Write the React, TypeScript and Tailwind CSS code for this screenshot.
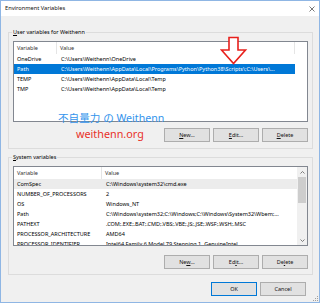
import React from 'react';

const userVars = [
    { name: 'OneDrive', value: 'C:\\Users\\Weithenn\\OneDrive' },
    { name: 'Path', value: 'C:\\Users\\Weithenn\\AppData\\Local\\Programs\\Python\\Python38\\Scripts\\;C:\\Users\\...', selected: true },
    { name: 'TEMP', value: 'C:\\Users\\Weithenn\\AppData\\Local\\Temp' },
    { name: 'TMP', value: 'C:\\Users\\Weithenn\\AppData\\Local\\Temp' },
];

const systemVars = [
    { name: 'ComSpec', value: 'C:\\Windows\\system32\\cmd.exe', selected: true },
    { name: 'NUMBER_OF_PROCESSORS', value: '2' },
    { name: 'OS', value: 'Windows_NT' },
    { name: 'Path', value: 'C:\\Windows\\system32;C:\\Windows;C:\\Windows\\System32\\Wbem;...' },
    { name: 'PATHEXT', value: '.COM;.EXE;.BAT;.CMD;.VBS;.VBE;.JS;.JSE;.WSF;.WSH;.MSC' },
    { name: 'PROCESSOR_ARCHITECTURE', value: 'AMD64' },
    { name: 'PROCESSOR_IDENTIFIER', value: 'Intel64 Family 6 Model 79 Stepping 1, GenuineIntel' },
];

function Btn({ pre, key1, post, primary }: { pre?: string; key1?: string; post?: string; primary?: boolean }) {
    return (
        <div
            className={`w-[46px] h-[14px] flex items-center justify-center bg-[#e1e1e1] border text-[5.5px] text-[#111] ${
                primary ? 'border-[#0078d7]' : 'border-[#adadad]'
            }`}
        >
            <span>
                {pre}
                {key1 && <span className="underline">{key1}</span>}
                {post}
            </span>
        </div>
    );
}

export default function App() {
    return (
        <div
            className="relative w-[320px] h-[303px] border border-[#8fb6e4] bg-[#f0f0f0] overflow-hidden text-black"
            style={{ fontFamily: '"Noto Sans", "Noto Sans CJK TC", sans-serif' }}
        >
            {/* title bar */}
            <div className="h-[15px] bg-white flex items-center justify-between pl-[4px] pr-[4px]">
                <span className="text-[5.7px] leading-none text-[#111]">Environment Variables</span>
                <svg width="6" height="6" viewBox="0 0 6 6">
                    <path d="M0.5 0.5L5.5 5.5M5.5 0.5L0.5 5.5" stroke="#555" strokeWidth="0.8" />
                </svg>
            </div>

            <div className="pl-[7px] pr-[6px]">
                {/* user variables */}
                <div className="relative mt-[16px] h-[117px] border border-[#dcdcdc] pt-[8px] pl-[4px] pr-[4px]">
                    <span className="absolute -top-[5px] left-[3px] px-[1px] bg-[#f0f0f0] text-[5.5px] leading-[8px]">
                        <span className="underline">U</span>ser variables for Weithenn
                    </span>
                    <div className="h-[81px] border border-[#828790] bg-white text-[5.5px]">
                        <div className="flex h-[12px] items-center text-[#333]">
                            <div className="w-[43px] h-full border-r border-[#e5e5e5] pl-[3px] flex items-center">Variable</div>
                            <div className="w-[238px] h-full border-r border-[#e5e5e5] pl-[3px] flex items-center">Value</div>
                        </div>
                        {userVars.map((v) => (
                            <div
                                key={v.name}
                                className={`flex h-[10px] items-center w-[281px] whitespace-nowrap overflow-hidden ${
                                    v.selected ? 'bg-[#0078d7] text-white' : ''
                                }`}
                            >
                                <div className="w-[44px] shrink-0 pl-[3px]">{v.name}</div>
                                <div className="pl-[3px] overflow-hidden">{v.value}</div>
                            </div>
                        ))}
                    </div>
                    <div className="flex justify-end gap-[3px] mt-[6px]">
                        <Btn key1="N" post="ew..." />
                        <Btn key1="E" post="dit..." />
                        <Btn key1="D" post="elete" />
                    </div>
                </div>

                {/* system variables */}
                <div className="relative mt-[8px] h-[118px] border border-[#dcdcdc] pt-[8px] pl-[4px] pr-[4px]">
                    <span className="absolute -top-[5px] left-[3px] px-[1px] bg-[#f0f0f0] text-[5.5px] leading-[8px]">
                        <span className="underline">S</span>ystem variables
                    </span>
                    <div className="h-[80px] border border-[#828790] bg-white text-[5.5px] flex overflow-hidden">
                        <div className="flex-1 min-w-0">
                            <div className="flex h-[12px] items-center text-[#333]">
                                <div className="w-[88px] h-full border-r border-[#e5e5e5] pl-[3px] flex items-center">Variable</div>
                                <div className="pl-[3px] flex items-center">Value</div>
                            </div>
                            {systemVars.map((v) => (
                                <div
                                    key={v.name}
                                    className={`flex h-[10px] items-center whitespace-nowrap overflow-hidden ${
                                        v.selected ? 'bg-[#ececec]' : ''
                                    }`}
                                >
                                    <div className="w-[89px] shrink-0 pl-[3px]">{v.name}</div>
                                    <div className="pl-[3px]">{v.value}</div>
                                </div>
                            ))}
                        </div>
                        {/* scrollbar */}
                        <div className="w-[10px] bg-[#f0f0f0] flex flex-col items-center">
                            <div className="h-[10px] flex items-center justify-center">
                                <svg width="5" height="3" viewBox="0 0 5 3">
                                    <path d="M0.5 2.5L2.5 0.5L4.5 2.5" stroke="#606060" strokeWidth="0.8" fill="none" />
                                </svg>
                            </div>
                            <div className="w-[8px] h-[26px] bg-[#cdcdcd]" />
                            <div className="flex-1" />
                            <div className="h-[10px] flex items-center justify-center">
                                <svg width="5" height="3" viewBox="0 0 5 3">
                                    <path d="M0.5 0.5L2.5 2.5L4.5 0.5" stroke="#606060" strokeWidth="0.8" fill="none" />
                                </svg>
                            </div>
                        </div>
                    </div>
                    <div className="flex justify-end gap-[3px] mt-[9px]">
                        <Btn pre="Ne" key1="w" post="..." />
                        <Btn pre="Ed" key1="i" post="t..." />
                        <Btn pre="De" key1="l" post="ete" />
                    </div>
                </div>

                <div className="flex justify-end gap-[3px] mt-[7px] pr-[7px]">
                    <Btn pre="OK" primary />
                    <Btn pre="Cancel" />
                </div>
            </div>

            {/* resize grip */}
            <svg className="absolute right-[1px] bottom-[1px]" width="5" height="5" viewBox="0 0 5 5">
                <rect x="4" y="0" width="1" height="1" fill="#a0a0a0" />
                <rect x="2" y="2" width="1" height="1" fill="#a0a0a0" />
                <rect x="4" y="2" width="1" height="1" fill="#a0a0a0" />
                <rect x="0" y="4" width="1" height="1" fill="#a0a0a0" />
                <rect x="2" y="4" width="1" height="1" fill="#a0a0a0" />
                <rect x="4" y="4" width="1" height="1" fill="#a0a0a0" />
            </svg>

            {/* red arrow */}
            <svg className="absolute left-[219px] top-[35px]" width="28" height="29" viewBox="0 0 28 29">
                <path
                    d="M9 1.5H18V14H25.5L13.5 27.5L1.5 14H9Z"
                    fill="white"
                    stroke="#e8201c"
                    strokeWidth="1.6"
                    strokeLinejoin="miter"
                />
            </svg>

            {/* watermark */}
            <div className="absolute left-[57px] top-[110px] text-[10.6px] leading-[14px] text-[#3394ec] whitespace-nowrap">
                不自量力 の Weithenn
            </div>
            <div className="absolute left-[75px] top-[126px] text-[10.8px] leading-[14px] text-[#e8302a] whitespace-nowrap">
                weithenn.org
            </div>
        </div>
    );
}
